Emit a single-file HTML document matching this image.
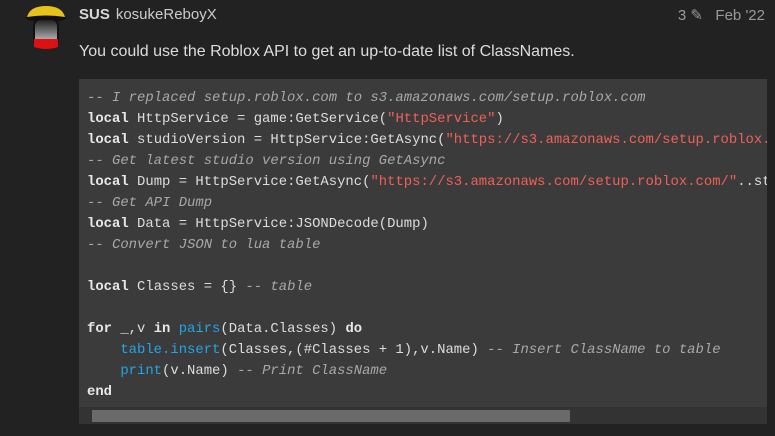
<!DOCTYPE html>
<html><head><style>
body{margin:0;width:775px;height:436px;background:#222;overflow:hidden;font-family:"Liberation Sans",sans-serif;position:relative}
.av{position:absolute;left:24px;top:3px}
.name{position:absolute;left:79px;top:6px;font-size:15px;color:#ccc}
.name b{color:#d8d8d8;margin-right:6px}
.meta{position:absolute;right:10px;top:6px;font-size:15px;color:#999}
.p{position:absolute;left:79px;top:43px;font-size:16px;color:#ddd}
.code{position:absolute;left:79px;top:79px;width:688px;height:345px;background:#3b3b3b;overflow:hidden}
pre{margin:0;position:absolute;left:8px;top:9px;font-family:"Liberation Mono",monospace;font-size:13.9px;line-height:21px;color:#ddd;white-space:pre}
.c{color:#a8a8a8;font-style:italic}.k{font-weight:bold;color:#e8e8e8}.s{color:#f0605a}.b{color:#22a6e8}
.sb{position:absolute;left:0;top:328px;width:688px;height:17px;background:#333}
.th{position:absolute;left:13px;top:331px;width:478px;height:12px;background:#6a6a6a}
</style></head><body>
<svg class="av" width="44" height="48" viewBox="0 0 44 48">
<defs><linearGradient id="g" x1="0" y1="0" x2="0" y2="1"><stop offset="0" stop-color="#222"/><stop offset="1" stop-color="#ccc"/></linearGradient></defs>
<ellipse cx="22" cy="15" rx="20" ry="4" fill="#111"/>
<path d="M3 14 Q6 3 22 3 Q38 3 41 14 Q22 11 3 14 Z" fill="#e6c21a"/>
<rect x="9" y="16" width="26" height="28" rx="7" fill="#111"/>
<rect x="11" y="17" width="22" height="24" rx="6" fill="url(#g)"/>
<path d="M10 36 H34 V44 Q22 48 10 44 Z" fill="#d11"/>
</svg>
<div class="name"><b>SUS</b>kosukeReboyX</div>
<div class="meta">3 ✎ &nbsp;&nbsp;Feb '22</div>
<div class="p">You could use the Roblox API to get an up-to-date list of ClassNames.</div>
<div class="code"><pre><span class="c">-- I replaced setup.roblox.com to s3.amazonaws.com/setup.roblox.com</span>
<span class="k">local</span> HttpService = game:GetService(<span class="s">"HttpService"</span>)
<span class="k">local</span> studioVersion = HttpService:GetAsync(<span class="s">"https://s3.amazonaws.com/setup.roblox.com/versionQTStudio"</span>)
<span class="c">-- Get latest studio version using GetAsync</span>
<span class="k">local</span> Dump = HttpService:GetAsync(<span class="s">"https://s3.amazonaws.com/setup.roblox.com/"</span>..studioVersion..<span class="s">"-API-Dump.json"</span>)
<span class="c">-- Get API Dump</span>
<span class="k">local</span> Data = HttpService:JSONDecode(Dump)
<span class="c">-- Convert JSON to lua table</span>

<span class="k">local</span> Classes = {} <span class="c">-- table</span>

<span class="k">for</span> _,v <span class="k">in</span> <span class="b">pairs</span>(Data.Classes) <span class="k">do</span>
    <span class="b">table.insert</span>(Classes,(#Classes + 1),v.Name) <span class="c">-- Insert ClassName to table</span>
    <span class="b">print</span>(v.Name) <span class="c">-- Print ClassName</span>
<span class="k">end</span></pre>
<div class="sb"></div><div class="th"></div></div>
</body></html>
